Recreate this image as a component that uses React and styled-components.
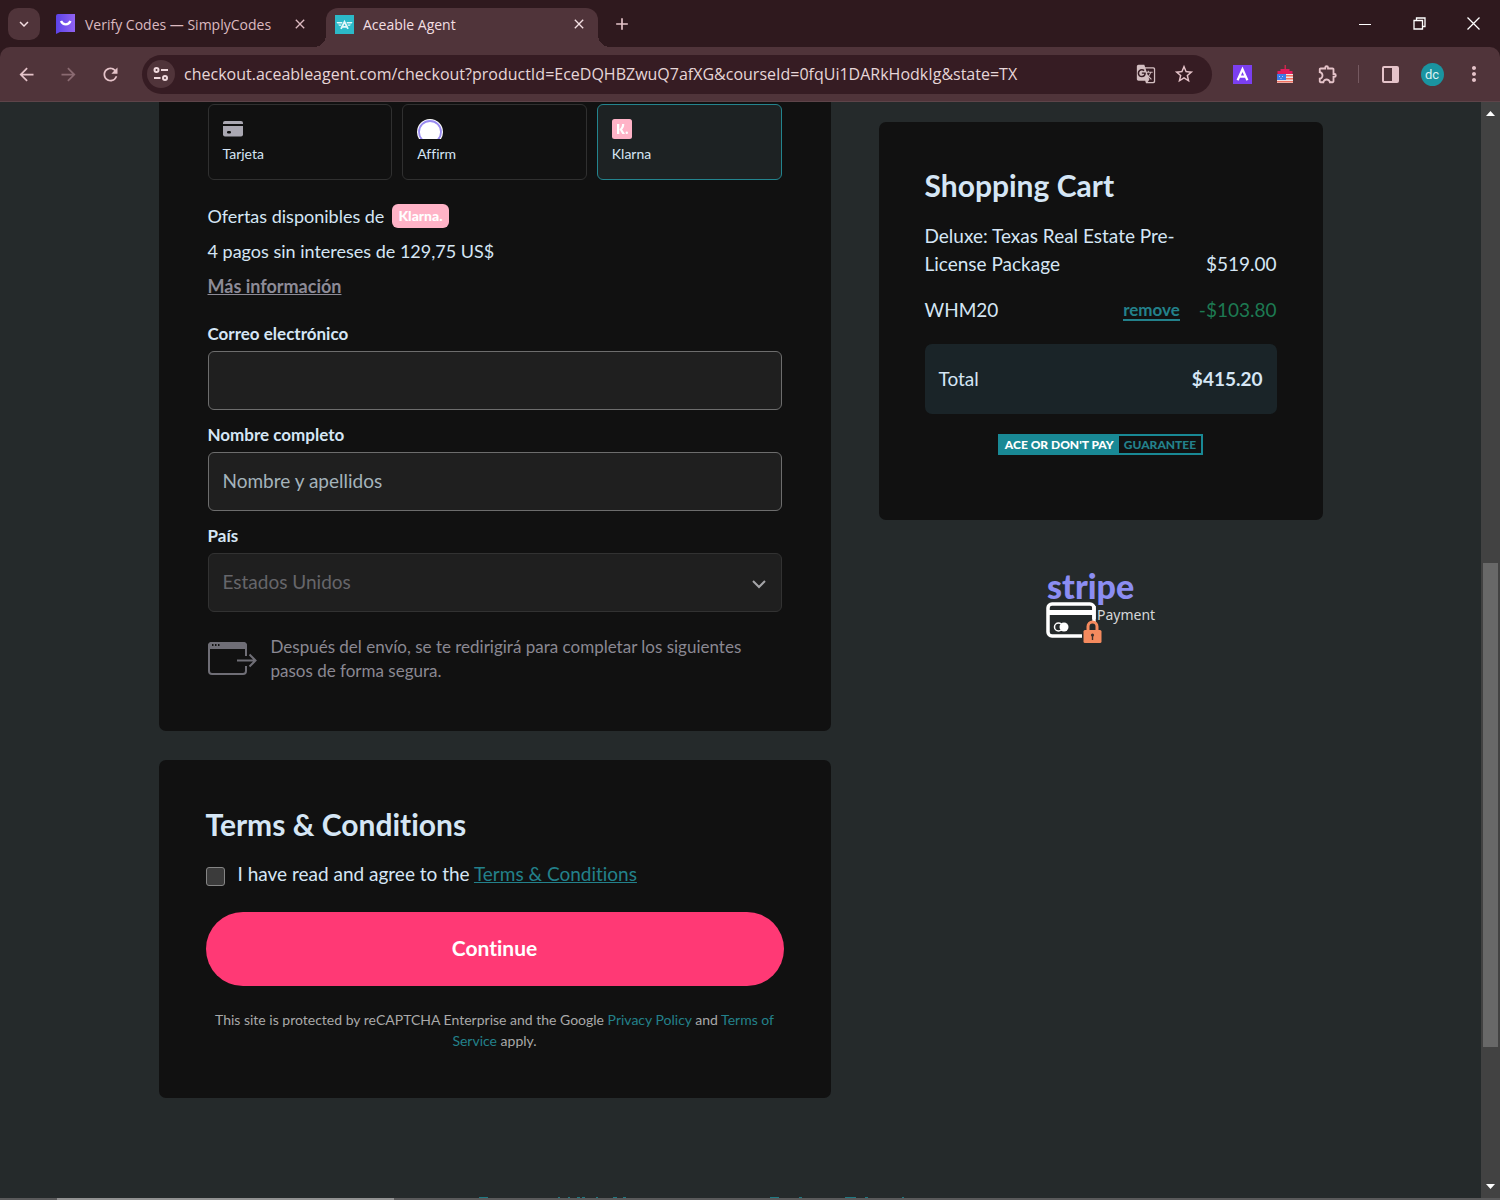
import React, { useState } from "react";
import styled, { createGlobalStyle } from "styled-components";
import {
  MdAdd,
  MdArrowBack,
  MdArrowForward,
  MdClose,
  MdGTranslate,
  MdKeyboardArrowDown,
  MdMoreVert,
  MdOutlineExtension,
  MdRefresh,
  MdStarOutline,
} from "react-icons/md";

const GlobalStyle = createGlobalStyle`
  * {
    box-sizing: border-box;
  }

  body {
    margin: 0;
    background: #252a2b;
    font-family: Lato, "Open Sans", sans-serif;
    font-variant-ligatures: none;
    color: #d5e6f5;
  }

  button, input, select {
    font-family: inherit;
    font-variant-ligatures: none;
  }

  svg {
    display: block;
    flex-shrink: 0;
  }
`;

const Window = styled.div`
  display: flex;
  flex-direction: column;
  height: 100vh;
  overflow: hidden;
`;

/* ---------- browser ---------- */

const TabStrip = styled.div`
  display: flex;
  align-items: center;
  height: 47px;
  flex-shrink: 0;
  padding-left: 8px;
  background: #2f191e;
  font-family: "Open Sans", sans-serif;
`;

const IconButton = styled.button`
  display: flex;
  align-items: center;
  justify-content: center;
  flex-shrink: 0;
  width: ${(p) => p.$width || 32}px;
  height: 32px;
  padding: 0;
  border: 0;
  border-radius: 10px;
  background: ${(p) => p.$bg || "none"};
  color: ${(p) => p.$color || "#e5c3c9"};
`;

const Tab = styled.div`
  position: relative;
  display: flex;
  align-items: center;
  gap: 9px;
  align-self: flex-end;
  width: ${(p) => (p.$active ? 272 : 270)}px;
  height: 39px;
  padding: ${(p) => (p.$active ? "0 9px 7px" : "0 16px 7px 0")};
  margin-left: ${(p) => (p.$active ? 0 : 16)}px;
  border-radius: 12px 12px 0 0;
  background: ${(p) => (p.$active ? "#50343a" : "none")};
  color: ${(p) => (p.$active ? "#f3dfe2" : "#dcb9c0")};
  font-size: 14px;

  &::before,
  &::after {
    content: "";
    display: ${(p) => (p.$active ? "block" : "none")};
    position: absolute;
    bottom: 0;
    width: 12px;
    height: 12px;
  }

  &::before {
    left: -12px;
    background: radial-gradient(circle at 0 0, transparent 12px, #50343a 12px);
  }

  &::after {
    right: -12px;
    background: radial-gradient(circle at 100% 0, transparent 12px, #50343a 12px);
  }
`;

const TabTitle = styled.span`
  flex: 1;
  white-space: nowrap;
`;

const TabClose = styled.button`
  display: flex;
  padding: 2px;
  border: 0;
  background: none;
  color: inherit;
`;

const WindowButtons = styled.div`
  display: flex;
  margin-left: auto;
`;

const ToolbarBack = styled.div`
  flex-shrink: 0;
  background: #2f191e;
`;

const Toolbar = styled.div`
  display: flex;
  align-items: center;
  height: 55px;
  padding: 0 5px;
  border-radius: 10px 10px 0 0;
  border-bottom: 1px solid #5d4449;
  background: #50343a;
  color: #e5c3c9;
`;

const Omnibox = styled.div`
  display: flex;
  align-items: center;
  flex: 1;
  height: 39px;
  margin: 0 14px 0 11px;
  padding: 0 12px 0 5px;
  border-radius: 20px;
  background: #361c23;
`;

const SiteInfo = styled.button`
  display: flex;
  align-items: center;
  justify-content: center;
  width: 28px;
  height: 28px;
  padding: 0;
  border: 0;
  border-radius: 50%;
  background: #50343a;
`;

const Address = styled.input`
  flex: 1;
  min-width: 0;
  padding: 0 0 0 9px;
  border: 0;
  outline: 0;
  background: none;
  color: #e6d6d8;
  font-family: "Open Sans", sans-serif;
  font-size: 16px;
`;

const Divider = styled.span`
  width: 1px;
  height: 18px;
  margin: 0 10px 0 14px;
  background: #755960;
`;

const Avatar = styled.span`
  display: flex;
  align-items: center;
  justify-content: center;
  width: 23px;
  height: 23px;
  border-radius: 50%;
  background: #1a94a0;
  color: #d9f1f3;
  font: 13px Roboto, sans-serif;
`;

const Viewport = styled.div`
  display: flex;
  flex: 1;
  min-height: 0;
`;

const Page = styled.div`
  display: flex;
  flex-direction: column;
  flex: 1;
  overflow: hidden;
`;

const Scrollbar = styled.div`
  display: flex;
  flex-direction: column;
  align-items: center;
  width: 19px;
  padding: 8px 0;
  background: #424242;
`;

const Gap = styled.span`
  flex: ${(p) => p.$grow};
`;

const Thumb = styled.span`
  flex: 483;
  width: 15px;
  background: #686868;
`;

const Taskbar = styled.div`
  height: 2px;
  flex-shrink: 0;
  padding-left: 57px;
  background: #5a5a5b;
`;

const TaskbarItem = styled.div`
  width: 337px;
  height: 2px;
  background: #929292;
`;

/* ---------- checkout ---------- */

const Columns = styled.main`
  display: grid;
  grid-template-columns: minmax(0, 1fr) 444px;
  gap: 48px;
  align-items: start;
  width: 100%;
  max-width: 1164px;
  margin: 0 auto;
`;

const Card = styled.section`
  padding: 47px;
  border-radius: 7px;
  background: #111111;
`;

const PaymentCard = styled(Card)`
  padding: 2px 49px 48px;
  margin-bottom: 29px;
  border-radius: 0 0 7px 7px;
`;

const Methods = styled.div`
  display: grid;
  grid-template-columns: repeat(3, 1fr);
  gap: 10px;
`;

const Method = styled.button`
  display: flex;
  flex-direction: column;
  align-items: flex-start;
  gap: 6px;
  height: 76px;
  padding: 14px;
  border: 1px solid ${(p) => (p.$selected ? "#23848e" : "#303030")};
  border-radius: 6px;
  background: ${(p) => (p.$selected ? "#1d2223" : "#111111")};
  color: #d5e6f5;
  font-size: 14px;
  line-height: 18px;
`;

const MethodIcon = styled.span`
  display: flex;
  align-items: center;
  height: 20px;
`;

const Offers = styled.div`
  display: flex;
  flex-direction: column;
  align-items: flex-start;
  gap: 11px;
  padding: 24px 0;
  font-size: 18px;
  line-height: 24px;
`;

const OfferTitle = styled.div`
  display: flex;
  gap: 8px;
`;

const KlarnaBadge = styled.span`
  padding: 0 6px;
  border-radius: 6px;
  background: #ffb3c7;
  color: #ffffff;
  font-size: 14px;
  font-weight: 900;
`;

const MoreLink = styled.a`
  color: #8d8b97;
  font-weight: 700;
`;

const Field = styled.div`
  display: flex;
  flex-direction: column;
  gap: 5px;
  position: relative;
  margin-bottom: 13px;
`;

const Label = styled.label`
  font-size: 17px;
  font-weight: 700;
  line-height: 24px;
`;

const Input = styled.input`
  height: 59px;
  padding: 0 14px 2px;
  border: 1px solid #6d6d6d;
  border-radius: 6px;
  outline: 0;
  background: #1f1f1f;
  color: #d5e6f5;
  font-size: 19px;

  &::placeholder {
    color: #a4b3bb;
    opacity: 1;
  }
`;

const Select = styled.select`
  appearance: none;
  height: 59px;
  padding: 0 14px 3px;
  border: 1px solid #323232;
  border-radius: 6px;
  background: #1f1f1f;
  color: #66666a;
  font-size: 19px;
  opacity: 1;
`;

const SelectArrow = styled.span`
  position: absolute;
  right: 15px;
  bottom: 20px;
  color: #a5a5a8;
  pointer-events: none;
`;

const Redirect = styled.div`
  display: flex;
  align-items: center;
  gap: 14px;
  padding-top: 10px;
  color: #8a8892;
  font-size: 17px;
  line-height: 24px;
`;

const Title = styled.h2`
  margin: 0;
  font-size: 30px;
  font-weight: 700;
  line-height: 34px;
`;

const Agree = styled.div`
  display: flex;
  align-items: center;
  gap: 13px;
  padding: 19px 0 24px;
  font-size: 19px;
  line-height: 28px;
`;

const Checkbox = styled.input`
  appearance: none;
  width: 19px;
  height: 19px;
  margin: 4px 0 0;
  border: 1px solid #858585;
  border-radius: 3px;
  background: #3b3b3b;

  &:checked {
    background: #17808c;
  }
`;

const Link = styled.a`
  color: #23818b;
  text-decoration: ${(p) => (p.$plain ? "none" : "underline")};
`;

const Continue = styled.button`
  display: block;
  width: 100%;
  height: 74px;
  padding: 0 0 3px;
  border: 0;
  border-radius: 37px;
  background: #ff3975;
  color: #ffffff;
  font-size: 21px;
  font-weight: 700;
`;

const Notice = styled.p`
  margin: 23px 0 0;
  color: #a9a9a9;
  font-size: 14px;
  line-height: 21px;
  text-align: center;
`;

const Side = styled.aside`
  display: flex;
  flex-direction: column;
  align-items: center;
  gap: 40px;
  padding-top: 20px;
`;

const CartCard = styled(Card)`
  width: 100%;
  padding: 46px 46px 65px;
`;

const CartRow = styled.div`
  display: flex;
  align-items: flex-end;
  justify-content: space-between;
  gap: 19px;
  padding-top: ${(p) => p.$top}px;
  font-size: 19px;
  line-height: 28px;
`;

const ItemName = styled.span`
  flex: 1;
  max-width: 264px;
`;

const Remove = styled.button`
  padding: 0;
  margin-bottom: 3px;
  border: 0;
  border-bottom: 2px solid #23818b;
  background: none;
  color: #23818b;
  font-size: 17px;
  font-weight: 700;
  line-height: 18px;
`;

const Discount = styled.span`
  color: #1d7a52;
`;

const TotalRow = styled.div`
  display: flex;
  align-items: center;
  justify-content: space-between;
  height: 70px;
  margin: 20px 0;
  padding: 0 14px 2px;
  border-radius: 7px;
  background: #1a2428;
  font-size: 19px;
`;

const Guarantee = styled.div`
  display: flex;
  width: fit-content;
  margin: 0 auto;
  border: 2px solid #198995;
  color: #23818b;
  font-size: 12px;
  font-weight: 900;
  line-height: 17px;
`;

const GuaranteePart = styled.span`
  padding: 0 5px;
  background: ${(p) => (p.$filled ? "#198995" : "none")};
  color: ${(p) => (p.$filled ? "#ffffff" : "#23818b")};
`;

const FooterEdge = styled.footer`
  display: flex;
  justify-content: center;
  margin-top: auto;
`;

/* ---------- icons ---------- */

const SimplyIcon = () => (
  <svg width="20" height="20" viewBox="0 0 20 20">
    <defs>
      <linearGradient id="simply" x1="0" x2="1">
        <stop offset="0" stopColor="#5b43e8" />
        <stop offset="1" stopColor="#9163f2" />
      </linearGradient>
    </defs>
    <path d="M2 0h17v18H4l-4 2V2a2 2 0 0 1 2-2z" fill="url(#simply)" />
    <path d="M5 7c2 4.500 7.500 4.500 9.500 0" fill="none" stroke="#fff" strokeWidth="2.400" />
  </svg>
);

const AceableIcon = () => (
  <svg width="19" height="19" viewBox="0 0 19 19">
    <path fill="#2cb9c8" d="M0 0h19v19H0z" />
    <path
      fill="#e4f8fa"
      d="M1.500 7h6L7 8.400H2.400zM3.200 9.400h3.300L6 10.800H4zM17.500 7h-6l.5 1.400h4.600zM15.800 9.400h-3.300l.5 1.400h2z"
    />
    <path
      fill="none"
      stroke="#e4f8fa"
      strokeWidth="1.800"
      d="M6 13.800l3.500-7 3.500 7M7.500 11.800h4"
    />
  </svg>
);

const SiteIcon = () => (
  <svg width="16" height="16" viewBox="0 0 16 16" fill="none" stroke="#f0d9dd" strokeWidth="2">
    <circle cx="3.500" cy="4" r="2" />
    <path d="M8 4h7M1 12h6.500" />
    <circle cx="12" cy="12" r="2" />
  </svg>
);

const RestoreIcon = () => (
  <svg width="13" height="13" viewBox="0 0 13 13" fill="none" stroke="#fff" strokeWidth="1.300">
    <path d="M1 3.500h8.500V12H1zM3.500 3.500V1H12v8.500H9.500" />
  </svg>
);

const WindowCloseIcon = () => (
  <svg width="13" height="13" viewBox="0 0 13 13" stroke="#fff" strokeWidth="1.300">
    <path d="M.5.5l12 12M12.500.5l-12 12" />
  </svg>
);

const MinimizeIcon = () => (
  <svg width="12" height="13" viewBox="0 0 12 13">
    <path d="M0 7h12v1H0z" fill="#fff" />
  </svg>
);

const LetterIcon = () => (
  <svg width="19" height="19" viewBox="0 0 19 19">
    <path fill="#7b3ff0" d="M0 0h19v19H0z" />
    <path
      d="M4.600 15.200L9.500 4.200l4.900 11M6.500 11.700h6"
      fill="none"
      stroke="#fff"
      strokeWidth="2.200"
    />
  </svg>
);

const CakeIcon = () => (
  <svg width="18" height="19" viewBox="0 0 18 19">
    <path fill="#c8284a" d="M8.500 0h1.500v4H8.500z" />
    <path fill="#e21c5c" d="M1.500 6h3V4h9v2h3v4h-15z" />
    <path fill="#f2e4e6" d="M1 9h16v9H1z" />
    <path fill="#3d7bea" d="M1 9h9v6H1z" />
    <path fill="#b7d0f5" d="M3 11h1v1H3zM6 11h1v1H6zM4.500 13h1v1h-1z" />
    <path fill="#f0705f" d="M10 10h7v1.500h-7zM10 13h7v1.500h-7zM1 16h16v1.500H1z" />
  </svg>
);

const PanelIcon = () => (
  <svg width="17" height="17" viewBox="0 0 17 17">
    <rect x="1" y="1" width="15" height="15" rx="1" fill="none" stroke="#e5c3c9" strokeWidth="2" />
    <path d="M10 1h6v15h-6z" fill="#e5c3c9" />
  </svg>
);

const CardIcon = () => (
  <svg width="20" height="16" viewBox="0 0 20 16">
    <path d="M2 0h16a2 2 0 0 1 2 2v1H0V2a2 2 0 0 1 2-2z" fill="#aaa8b2" />
    <path d="M0 5h20v8.500a2 2 0 0 1-2 2H2a2 2 0 0 1-2-2z" fill="#aaa8b2" />
    <rect x="4" y="10" width="4" height="2.500" rx="1.200" fill="#111" />
  </svg>
);

const AffirmIcon = () => (
  <svg width="26" height="20" viewBox="0 0 26 20">
    <circle cx="13" cy="13" r="13" fill="#fff" />
    <circle cx="13" cy="13" r="11" fill="none" stroke="#988af0" strokeWidth="1.800" />
  </svg>
);

const KlarnaIcon = () => (
  <svg width="20" height="20" viewBox="0 0 20 20">
    <rect width="20" height="20" rx="2.500" fill="#ffb3c7" />
    <path d="M5 5h2.300v10H5zM10 5h2.300c0 2.400-.9 4.200-2.200 5.400l2.900 4.600h-2.700L7.500 10.200C9.200 9.200 10 7.300 10 5z" fill="#fff" />
    <circle cx="14.800" cy="13.800" r="1.200" fill="#fff" />
  </svg>
);

const RedirectIcon = () => (
  <svg width="49" height="34" viewBox="0 0 49 34" fill="none" stroke="#6f6e76" strokeWidth="2">
    <path d="M38 14V4a3 3 0 0 0-3-3H4a3 3 0 0 0-3 3v25a3 3 0 0 0 3 3h31a3 3 0 0 0 3-3v-5" />
    <path d="M1 6V4a3 3 0 0 1 3-3h31a3 3 0 0 1 3 3v2z" fill="#6f6e76" />
    <path d="M4 3h1.500M7 3h1.500M10 3h1.500" stroke="#111" />
    <path d="M29 18.500h18M41.500 12.500l6 6-6 6" />
  </svg>
);

const StripeLogo = () => (
  <svg width="112" height="84" viewBox="-1 -10 112 84" role="img" aria-label="stripe Payment">
    <text x="1" y="29" fill="#8b8df2" fontFamily="Lato" fontWeight="900" fontSize="34">
      stripe
    </text>
    <rect x="2" y="34" width="46" height="32" rx="4" fill="none" stroke="#fff" strokeWidth="3.500" />
    <path d="M3 40h45v5H3z" fill="#fff" />
    <circle cx="12.500" cy="57" r="4" fill="none" stroke="#fff" strokeWidth="1.500" />
    <circle cx="18" cy="57" r="4.500" fill="#fff" />
    <path d="M36 52h22v18H36z" fill="#252a2b" />
    <path d="M48 36v13" stroke="#fff" strokeWidth="3.500" />
    <path d="M42 61v-4.500a4.500 4.500 0 0 1 9 0V61" fill="none" stroke="#f58a5e" strokeWidth="3" />
    <rect x="37.500" y="60" width="18" height="13" rx="1.500" fill="#f58a5e" />
    <circle cx="46.500" cy="65" r="1.600" fill="#40302b" />
    <path d="M45.800 65h1.400v5h-1.400z" fill="#40302b" />
    <text x="51" y="50" fill="#d5d7d8" fontFamily="Noto Sans" fontSize="14">
      Payment
    </text>
  </svg>
);

/* tops of the footer links, just above the fold */
const LinkTops = () => (
  <svg width="524" height="1" viewBox="0 0 524 1" fill="#1f7882">
    <path d="M0 0h9v1H0zM79 0h2v1h-2zM89 0h2v1h-2zM98 0h3v1h-3zM103 0h3v1h-3zM117 0h2v1h-2zM134 0h4v1h-4zM144 0h3v1h-3zM291 0h9v1h-9zM320 0h3v1h-3zM366 0h11v1h-11zM386 0h3v1h-3zM423 0h2v1h-2z" />
  </svg>
);

const methods = [
  { id: "card", name: "Tarjeta", Icon: CardIcon },
  { id: "affirm", name: "Affirm", Icon: AffirmIcon },
  { id: "klarna", name: "Klarna", Icon: KlarnaIcon },
];

const Browser = () => (
  <>
    <TabStrip>
      <IconButton $bg="#50343a" $color="#f3dfe2" aria-label="Search tabs">
        <MdKeyboardArrowDown size={18} />
      </IconButton>
      <Tab>
        <SimplyIcon />
        <TabTitle>Verify Codes — SimplyCodes</TabTitle>
        <TabClose aria-label="Close tab">
          <MdClose size={16} />
        </TabClose>
      </Tab>
      <Tab $active>
        <AceableIcon />
        <TabTitle>Aceable Agent</TabTitle>
        <TabClose aria-label="Close tab">
          <MdClose size={16} />
        </TabClose>
      </Tab>
      <IconButton $width={47} aria-label="New tab">
        <MdAdd size={20} />
      </IconButton>
      <WindowButtons>
        <IconButton $width={54} aria-label="Minimize">
          <MinimizeIcon />
        </IconButton>
        <IconButton $width={54} aria-label="Restore">
          <RestoreIcon />
        </IconButton>
        <IconButton $width={54} aria-label="Close">
          <WindowCloseIcon />
        </IconButton>
      </WindowButtons>
    </TabStrip>
    <ToolbarBack>
      <Toolbar>
        <IconButton $width={42} aria-label="Back">
          <MdArrowBack size={21} />
        </IconButton>
        <IconButton $width={42} $color="#8a6a71" aria-label="Forward">
          <MdArrowForward size={21} />
        </IconButton>
        <IconButton $width={42} aria-label="Reload">
          <MdRefresh size={21} />
        </IconButton>
        <Omnibox>
          <SiteInfo aria-label="Site information">
            <SiteIcon />
          </SiteInfo>
          <Address
            aria-label="Address"
            defaultValue="checkout.aceableagent.com/checkout?productId=EceDQHBZwuQ7afXG&courseId=0fqUi1DARkHodkIg&state=TX"
          />
          <IconButton $width={44} $color="#d3bec1" aria-label="Translate">
            <MdGTranslate size={20} />
          </IconButton>
          <IconButton aria-label="Bookmark">
            <MdStarOutline size={22} />
          </IconButton>
        </Omnibox>
        <IconButton aria-label="Extension A">
          <LetterIcon />
        </IconButton>
        <IconButton $width={54} aria-label="Cake extension">
          <CakeIcon />
        </IconButton>
        <IconButton aria-label="Extensions">
          <MdOutlineExtension size={22} />
        </IconButton>
        <Divider />
        <IconButton $width={42} aria-label="Side panel">
          <PanelIcon />
        </IconButton>
        <IconButton $width={42} aria-label="Profile">
          <Avatar>dc</Avatar>
        </IconButton>
        <IconButton $width={42} aria-label="Menu">
          <MdMoreVert size={24} />
        </IconButton>
      </Toolbar>
    </ToolbarBack>
  </>
);

const Payment = () => {
  const [selected, setSelected] = useState("klarna");

  return (
    <PaymentCard>
      <Methods>
        {methods.map(({ id, name, Icon }) => (
          <Method
            key={id}
            type="button"
            $selected={id === selected}
            aria-pressed={id === selected}
            onClick={() => setSelected(id)}
          >
            <MethodIcon>
              <Icon />
            </MethodIcon>
            {name}
          </Method>
        ))}
      </Methods>
      <Offers>
        <OfferTitle>
          Ofertas disponibles de <KlarnaBadge>Klarna.</KlarnaBadge>
        </OfferTitle>
        <span>4 pagos sin intereses de 129,75 US$</span>
        <MoreLink href="#info">Más información</MoreLink>
      </Offers>
      <Field>
        <Label htmlFor="email">Correo electrónico</Label>
        <Input id="email" type="email" />
      </Field>
      <Field>
        <Label htmlFor="name">Nombre completo</Label>
        <Input id="name" placeholder="Nombre y apellidos" />
      </Field>
      <Field>
        <Label htmlFor="country">País</Label>
        <Select id="country" disabled defaultValue="US">
          <option value="US">Estados Unidos</option>
        </Select>
        <SelectArrow>
          <svg width="16" height="16" viewBox="0 0 16 16" fill="none" stroke="currentColor" strokeWidth="2">
            <path d="M2 5l6 6 6-6" />
          </svg>
        </SelectArrow>
      </Field>
      <Redirect>
        <RedirectIcon />
        <span>
          Después del envío, se te redirigirá para completar los siguientes pasos de forma segura.
        </span>
      </Redirect>
    </PaymentCard>
  );
};

const Terms = () => (
  <Card>
    <Title>Terms &amp; Conditions</Title>
    <Agree>
      <Checkbox type="checkbox" id="agree" />
      <label htmlFor="agree">
        I have read and agree to the <Link href="#terms">Terms &amp; Conditions</Link>
      </label>
    </Agree>
    <Continue type="button">Continue</Continue>
    <Notice>
      This site is protected by reCAPTCHA Enterprise and the Google{" "}
      <Link $plain href="#privacy">Privacy Policy</Link> and{" "}
      <Link $plain href="#service">Terms of Service</Link> apply.
    </Notice>
  </Card>
);

const Cart = () => (
  <CartCard>
    <Title>Shopping Cart</Title>
    <CartRow $top={20}>
      <ItemName>Deluxe: Texas Real Estate Pre-License Package</ItemName>
      <span>$519.00</span>
    </CartRow>
    <CartRow $top={18}>
      <ItemName>WHM20</ItemName>
      <Remove type="button">remove</Remove>
      <Discount>-$103.80</Discount>
    </CartRow>
    <TotalRow>
      <span>Total</span>
      <strong>$415.20</strong>
    </TotalRow>
    <Guarantee>
      <GuaranteePart $filled>ACE OR DON'T PAY</GuaranteePart>
      <GuaranteePart>GUARANTEE</GuaranteePart>
    </Guarantee>
  </CartCard>
);

const App = () => (
  <>
    <GlobalStyle />
    <Window>
      <Browser />
      <Viewport>
        <Page>
          <Columns>
            <div>
              <Payment />
              <Terms />
            </div>
            <Side>
              <Cart />
              <StripeLogo />
            </Side>
          </Columns>
          <FooterEdge>
            <LinkTops />
          </FooterEdge>
        </Page>
        <Scrollbar>
          <svg width="9" height="6" viewBox="0 0 9 6" fill="#fff">
            <path d="M0 6l4.500-5L9 6z" />
          </svg>
          <Gap $grow={447} />
          <Thumb />
          <Gap $grow={137} />
          <svg width="9" height="6" viewBox="0 0 9 6" fill="#fff">
            <path d="M0 0l4.500 5L9 0z" />
          </svg>
        </Scrollbar>
      </Viewport>
      <Taskbar>
        <TaskbarItem />
      </Taskbar>
    </Window>
  </>
);

export default App;
